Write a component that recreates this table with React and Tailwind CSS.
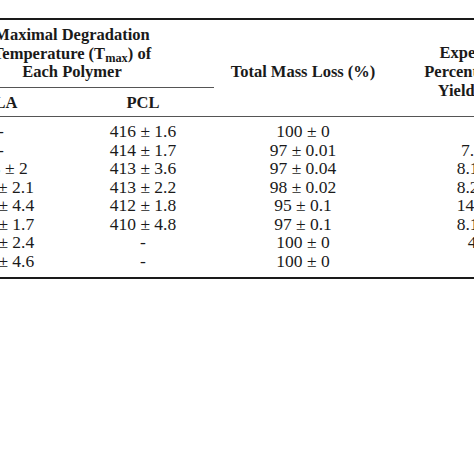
const cols = 'grid grid-cols-[142px_142px_178px_160px] text-center';

const rows = [
  ['-', '416 ± 1.6', '100 ± 0', ''],
  ['-', '414 ± 1.7', '97 ± 0.01', '7.6'],
  ['413 ± 2', '413 ± 3.6', '97 ± 0.04', '8.13'],
  ['411 ± 2.1', '413 ± 2.2', '98 ± 0.02', '8.24'],
  ['410 ± 4.4', '412 ± 1.8', '95 ± 0.1', '14.3'],
  ['412 ± 1.7', '410 ± 4.8', '97 ± 0.1', '8.18'],
  ['409 ± 2.4', '-', '100 ± 0', '4'],
  ['408 ± 4.6', '-', '100 ± 0', ''],
];

export default function App() {
  return (
    <div className="w-[474px] h-[474px] overflow-hidden bg-white text-[#1a1a1a] font-['Liberation_Serif',serif]">
      <div className="-ml-[70px] w-[622px] pt-[18px]">
        {/* top rule */}
        <div className="border-t-2 border-[#1a1a1a]" />

        {/* header */}
        <div className={`${cols} font-bold text-[16.5px]`}>
          <div className="col-span-2">
            <div className="pt-[6px] pb-[5px] leading-[18.5px]">
              Maximal Degradation
              <br />
              Temperature (T<sub>max</sub>) of
              <br />
              Each Polymer
            </div>
            <div className="border-t border-[#555]" />
            <div className="grid grid-cols-2 leading-[18.5px] pt-[6px] pb-[4px]">
              <div>PLA</div>
              <div>PCL</div>
            </div>
          </div>
          <div className="flex items-center justify-center pt-[8px]">Total Mass Loss (%)</div>
          <div className="flex items-center justify-center leading-[19px] pt-[6px]">
            <div>
              Expected
              <br />
              Percentage of
              <br />
              Yield (%)
            </div>
          </div>
        </div>

        {/* mid rule */}
        <div className="border-t-[1.5px] border-[#555]" />

        {/* body */}
        <div className="pt-[5px] pb-[6px] text-[17.5px] leading-[18.57px]">
          {rows.map((r, i) => (
            <div key={i} className={cols}>
              {r.map((c, j) => (
                <div key={j} className="whitespace-nowrap">{c}</div>
              ))}
            </div>
          ))}
        </div>

        {/* bottom rule */}
        <div className="border-t-2 border-[#1a1a1a]" />
      </div>
    </div>
  );
}
